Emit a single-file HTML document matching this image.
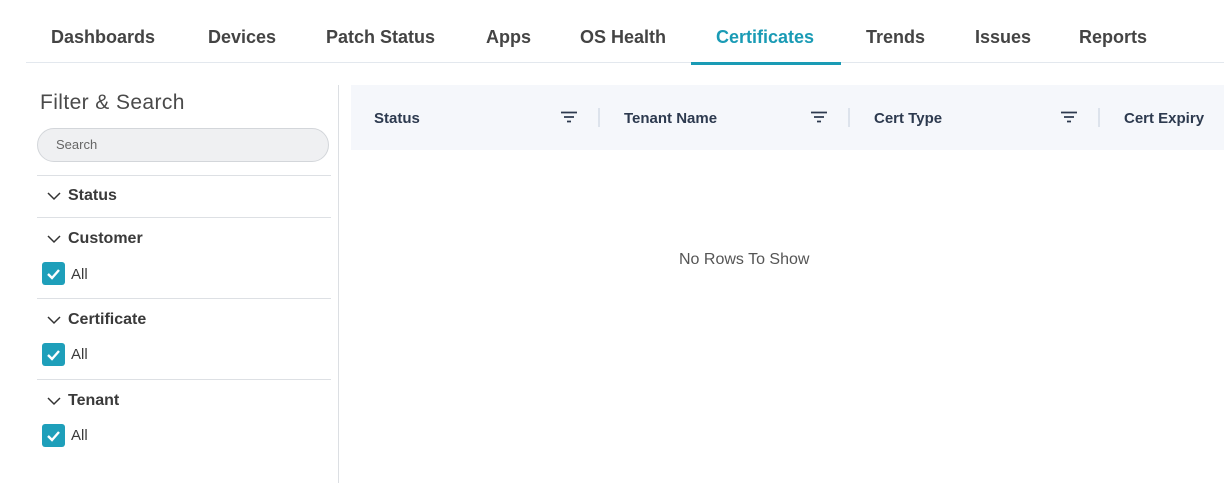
<!DOCTYPE html>
<html><head><style>
body{margin:0;width:1224px;height:483px;background:#fff;font-family:"Liberation Sans",sans-serif;position:relative;overflow:hidden;color:#3a3a3a}
.a{position:absolute;white-space:nowrap}
.tab{top:27px;font-size:18px;font-weight:bold;color:#444}
.h{top:110px;font-size:15px;font-weight:bold;color:#2d3a4f}
.sec{font-size:16px;font-weight:bold;color:#3a3a3a}
.line{position:absolute;left:37px;width:294px;height:1px;background:#dde0e4}
.cb{position:absolute;left:42px;width:23px;height:23px;background:#1e9fba;border-radius:3px}
.all{font-size:15px;color:#3a3a3a}
.fi{position:absolute;width:18px;height:12px}
</style></head><body>
<div class="a tab" style="left:51px">Dashboards</div>
<div class="a tab" style="left:208px">Devices</div>
<div class="a tab" style="left:326px">Patch Status</div>
<div class="a tab" style="left:486px">Apps</div>
<div class="a tab" style="left:580px">OS Health</div>
<div class="a tab" style="left:716px;color:#1a9bb5">Certificates</div>
<div class="a tab" style="left:866px">Trends</div>
<div class="a tab" style="left:975px">Issues</div>
<div class="a tab" style="left:1079px">Reports</div>
<div class="a" style="left:26px;top:62px;width:1198px;height:1px;background:#e3e8ee"></div>
<div class="a" style="left:691px;top:62px;width:150px;height:3px;background:#1a9bb5"></div>

<div class="a" style="left:40px;top:91px;font-size:21px;color:#4a4a4a;letter-spacing:0.4px">Filter &amp; Search</div>
<div class="a" style="left:37px;top:128px;width:290px;height:32px;border:1px solid #d3d6da;border-radius:17px;background:#eff0f2"></div>
<div class="a" style="left:56px;top:137px;font-size:13px;color:#666">Search</div>
<div class="line" style="top:175px"></div>
<div class="line" style="top:217px"></div>
<div class="line" style="top:298px"></div>
<div class="line" style="top:379px"></div>
<svg class="a" style="left:46px;top:190px" width="16" height="12"><path d="M2 3l6 6 6-6" fill="none" stroke="#333" stroke-width="1.5"/></svg>
<div class="a sec" style="left:68px;top:187px">Status</div>
<svg class="a" style="left:46px;top:233px" width="16" height="12"><path d="M2 3l6 6 6-6" fill="none" stroke="#333" stroke-width="1.5"/></svg>
<div class="a sec" style="left:68px;top:230px">Customer</div>
<svg class="a" style="left:46px;top:314px" width="16" height="12"><path d="M2 3l6 6 6-6" fill="none" stroke="#333" stroke-width="1.5"/></svg>
<div class="a sec" style="left:68px;top:311px">Certificate</div>
<svg class="a" style="left:46px;top:395px" width="16" height="12"><path d="M2 3l6 6 6-6" fill="none" stroke="#333" stroke-width="1.5"/></svg>
<div class="a sec" style="left:68px;top:392px">Tenant</div>
<div class="cb" style="top:262px"><svg width="23" height="23"><path d="M6 12l4 4 7-8" fill="none" stroke="#fff" stroke-width="2.4"/></svg></div>
<div class="a all" style="left:71px;top:266px">All</div>
<div class="cb" style="top:343px"><svg width="23" height="23"><path d="M6 12l4 4 7-8" fill="none" stroke="#fff" stroke-width="2.4"/></svg></div>
<div class="a all" style="left:71px;top:346px">All</div>
<div class="cb" style="top:424px"><svg width="23" height="23"><path d="M6 12l4 4 7-8" fill="none" stroke="#fff" stroke-width="2.4"/></svg></div>
<div class="a all" style="left:71px;top:427px">All</div>

<div class="a" style="left:338px;top:85px;width:1px;height:398px;background:#dcdfe3"></div>
<div class="a" style="left:351px;top:85px;width:873px;height:65px;background:#f5f7fb"></div>
<div class="a h" style="left:374px">Status</div>
<div class="a h" style="left:624px">Tenant Name</div>
<div class="a h" style="left:874px">Cert Type</div>
<div class="a h" style="left:1124px">Cert Expiry</div>
<svg class="fi" style="left:560px;top:111px"><path d="M1 1.5h16M4 6h10M7 10.5h4" stroke="#2d3a4f" stroke-width="1.8"/></svg>
<svg class="fi" style="left:810px;top:111px"><path d="M1 1.5h16M4 6h10M7 10.5h4" stroke="#2d3a4f" stroke-width="1.8"/></svg>
<svg class="fi" style="left:1060px;top:111px"><path d="M1 1.5h16M4 6h10M7 10.5h4" stroke="#2d3a4f" stroke-width="1.8"/></svg>
<div class="a" style="left:598px;top:108px;width:2px;height:19px;background:#dde3ec"></div>
<div class="a" style="left:848px;top:108px;width:2px;height:19px;background:#dde3ec"></div>
<div class="a" style="left:1098px;top:108px;width:2px;height:19px;background:#dde3ec"></div>
<div class="a" style="left:679px;top:251px;font-size:16px;color:#555">No Rows To Show</div>
</body></html>
